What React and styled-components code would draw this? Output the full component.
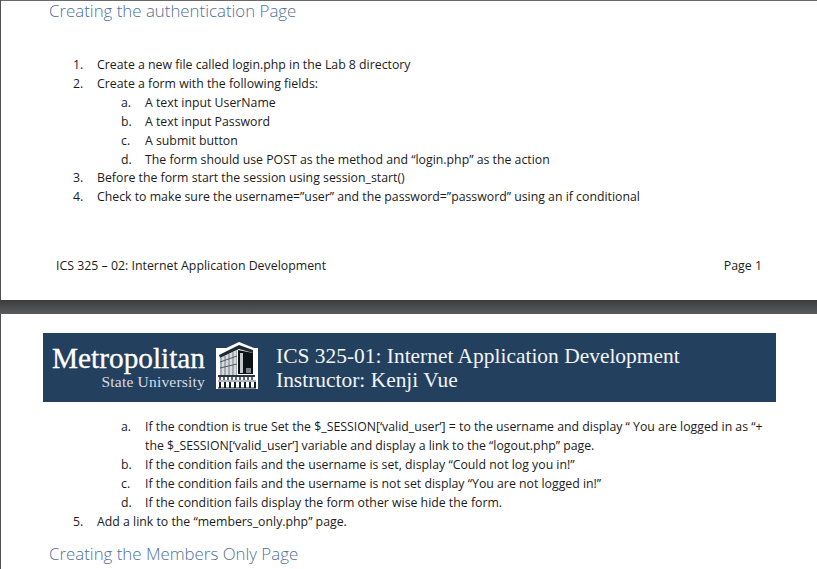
import React from 'react';
import styled, { createGlobalStyle } from 'styled-components';

const GlobalStyle = createGlobalStyle`
    html, body {
        margin: 0;
        padding: 0;
        background: #fff;
        overflow: hidden;
    }
    body {
        font-family: "Open Sans", "Liberation Sans", sans-serif;
    }
`;

const Viewer = styled.div`
    width: 817px;
    height: 569px;
    overflow: hidden;
    background: #4f5051;
    display: flex;
    flex-direction: column;
`;

const Sheet = styled.section`
    background: #fff;
    margin-left: 1px;
    flex: none;
    height: ${(p) => p.$height}px;
    box-sizing: border-box;
    overflow: hidden;
`;

const TopSheet = styled(Sheet)`
    border-top: 1px solid #6a6a6a;
    padding: 0 0 0 48px;
`;

const Gutter = styled.div`
    flex: none;
    height: 14px;
    background: linear-gradient(#3b3c3c, #5a5b5c);
`;

const Heading = styled.h2`
    margin: -1px 0 0;
    font-family: "Open Sans", sans-serif;
    font-weight: 300;
    font-size: 16.85px;
    line-height: 22px;
    color: #4f7199;
    white-space: nowrap;
`;

const List = styled.div`
    display: flex;
    flex-direction: column;
    margin-top: 34px;
`;

const Item = styled.div`
    display: flex;
    font-size: 12.3px;
    line-height: 18.9px;
    color: #1b1b1b;
    padding-left: ${(p) => (p.$sub ? 72 : 24)}px;
    white-space: pre;
`;

const Marker = styled.span`
    flex: none;
    width: 24px;
`;

const Footer = styled.div`
    display: flex;
    justify-content: space-between;
    margin-top: 50px;
    padding: 0 55px 0 7px;
    font-size: 12.35px;
    line-height: 18px;
    color: #1b1b1b;
`;

const BottomSheet = styled(Sheet)`
    padding: 19px 0 0 42px;
`;

const Banner = styled.header`
    width: 733px;
    height: 69px;
    background: #24405f;
    display: flex;
    align-items: center;
    font-family: "Liberation Serif", serif;
    color: #fff;
    box-sizing: border-box;
    padding-left: 9px;
`;

const Wordmark = styled.div`
    width: 153px;
    display: flex;
    flex-direction: column;
    align-items: flex-end;
`;

const WordmarkName = styled.span`
    font-size: 29.3px;
    line-height: 29px;
    font-weight: 400;
    white-space: nowrap;
    -webkit-text-stroke: 0.3px #fff;
`;

const WordmarkSub = styled.span`
    font-size: 15.5px;
    line-height: 18px;
    letter-spacing: 0.2px;
    color: #d8dee6;
    white-space: nowrap;
`;

const Crest = styled.svg`
    flex: none;
    margin: 0 0 3px 10px;
    width: 43px;
    height: 48px;
`;

const BannerTitle = styled.div`
    margin: 1px 0 0 18px;
    font-size: 21.45px;
    line-height: 24.5px;
    color: #f2f4f7;
    white-space: nowrap;
`;

const BottomList = styled(List)`
    margin: 16px 0 0 6px;
`;

const Wrapped = styled.span`
    white-space: normal;
    width: 630px;
`;

const BottomHeading = styled(Heading)`
    margin: 12px 0 0 6px;
`;

const Continued = styled(BottomList)`
    margin-top: 2px;
`;

const College = () => (
    <Crest viewBox="0 0 43 48">
        <rect x="1" y="6" width="42" height="41" fill="#fff" />
        <path d="M5 9 L24 0 L39 6 L39 9Z" fill="#fff" />
        <path d="M4 13 L24 3 L38 8 L38 11 L24 7 L5 16Z" fill="#1f2a35" />
        <path d="M5 16 L22 8 L22 34 L5 34Z" fill="#a3abb1" />
        <path d="M8 15v19M12 13v21M16 11v23M20 9v25" stroke="#eef0f1" strokeWidth="1.4" />
        <path d="M5 20l17-6M5 26l17-4" stroke="#4c5761" strokeWidth="1" />
        <path d="M23 8l15 3v21h-15z" fill="#0d1217" />
        <path d="M25 11h3v20h-3z" fill="#c2c8cc" />
        <path d="M31 26h5v5h-5z" fill="#7b858d" />
        <path d="M3 33h37v2h-37z" fill="#2a3540" />
        <path d="M5 35v3M9 35v3M13 35v3M17 35v3M21 35v3M25 35v3M29 35v3M33 35v3M37 35v3" stroke="#2a3540" strokeWidth="1.5" />
        <path d="M3 39h38" stroke="#5d6872" strokeWidth="1" />
        <path d="M5 40v6M10 40v6M15 40v6M20 40v6M25 40v6M30 40v6M35 40v6M40 40v6" stroke="#141c24" strokeWidth="2" />
        <path d="M3 46h38" stroke="#141c24" strokeWidth="1" />
    </Crest>
);

export default function App() {
    return (
        <Viewer>
            <GlobalStyle />
            <TopSheet $height={300}>
                <Heading>Creating the authentication Page</Heading>
                <List>
                    <Item><Marker>1.</Marker>Create a new file called login.php in the Lab 8 directory</Item>
                    <Item><Marker>2.</Marker>Create a form with the following fields:</Item>
                    <Item $sub><Marker>a.</Marker>A text input UserName</Item>
                    <Item $sub><Marker>b.</Marker>A text input Password</Item>
                    <Item $sub><Marker>c.</Marker>A submit button</Item>
                    <Item $sub><Marker>d.</Marker>The form should use POST as the method and “login.php” as the action</Item>
                    <Item><Marker>3.</Marker>Before the form start the session using session_start()</Item>
                    <Item><Marker>4.</Marker>Check to make sure the username=”user” and the password=”password” using an if conditional</Item>
                </List>
                <Footer>
                    <span>ICS 325 – 02: Internet Application Development</span>
                    <span>Page 1</span>
                </Footer>
            </TopSheet>
            <Gutter />
            <BottomSheet $height={255}>
                <Banner>
                    <Wordmark>
                        <WordmarkName>Metropolitan</WordmarkName>
                        <WordmarkSub>State University</WordmarkSub>
                    </Wordmark>
                    <College />
                    <BannerTitle>
                        ICS 325-01: Internet Application Development<br />
                        Instructor: Kenji Vue
                    </BannerTitle>
                </Banner>
                <BottomList>
                    <Item $sub><Marker>a.</Marker><Wrapped>If the condtion is true Set the $_SESSION[‘valid_user’] = to the username and display “ You are logged in as “+ the $_SESSION[‘valid_user’] variable and display a link to the “logout.php” page.</Wrapped></Item>
                    <Item $sub><Marker>b.</Marker>If the condition fails and the username is set, display “Could not log you in!”</Item>
                    <Item $sub><Marker>c.</Marker>If the condition fails and the username is not set display “You are not logged in!”</Item>
                    <Item $sub><Marker>d.</Marker>If the condition fails display the form other wise hide the form.</Item>
                    <Item><Marker>5.</Marker>Add a link to the “members_only.php” page.</Item>
                </BottomList>
                <BottomHeading>Creating the Members Only Page</BottomHeading>
                <Continued>
                    <Item><Marker>1.</Marker>Create a new file called “members_only.php”</Item>
                </Continued>
            </BottomSheet>
        </Viewer>
    );
}
